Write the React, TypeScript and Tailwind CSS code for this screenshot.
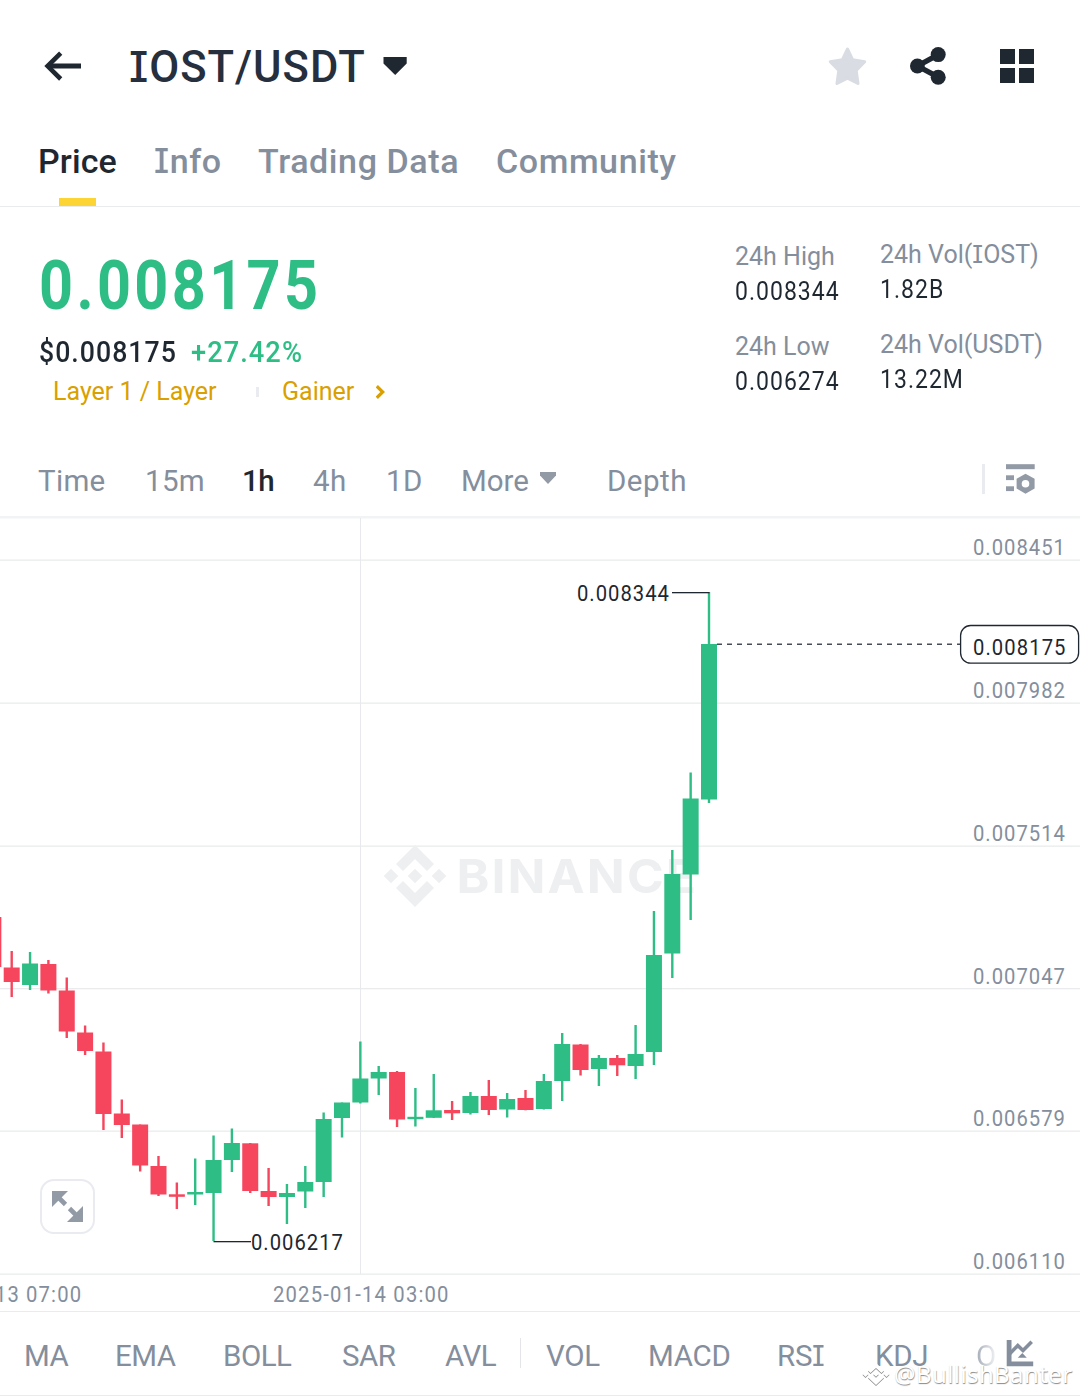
import { useState } from 'react'

const tabs = [
  { name: 'Price', size: 'w-[116px]' },
  { name: 'Info', size: 'w-[104px]' },
  { name: 'Trading Data', size: 'w-[238px]' },
  { name: 'Community', size: 'w-[190px]' },
];

const intervals = [
  { name: 'Time', size: 'w-[107px]' },
  { name: '15m', size: 'w-[97px]' },
  { name: '1h', size: 'w-[71px]' },
  { name: '4h', size: 'w-[73px]' },
  { name: '1D', size: 'w-[75px]' },
];

const mainIndicators = [
  { name: 'MA', size: 'w-[91px]' },
  { name: 'EMA', size: 'w-[108px]' },
  { name: 'BOLL', size: 'w-[119px]' },
  { name: 'SAR', size: 'w-[103px]' },
  { name: 'AVL', size: 'w-[75px]' },
];

const subIndicators = [
  { name: 'VOL', size: 'w-[102px]' },
  { name: 'MACD', size: 'w-[129px]' },
  { name: 'RSI', size: 'w-[98px]' },
  { name: 'KDJ', size: 'w-[101px]' },
];

const gridLines = [
  { y: 560, label: '0.008451' },
  { y: 703, label: '0.007982' },
  { y: 846, label: '0.007514' },
  { y: 988.5, label: '0.007047' },
  { y: 1131, label: '0.006579' },
  { y: 1274, label: '0.006110' },
];

// [direction, high, body top, body bottom, low]
type Candle = ['up' | 'down', number, number, number, number];

const candles: Candle[] = [
  ['down', 917, 917, 967, 967],
  ['down', 951, 967.5, 982, 997],
  ['up', 952, 963.5, 985, 990],
  ['down', 960, 964, 990.5, 993.5],
  ['down', 977.5, 990.5, 1031.5, 1038],
  ['down', 1025.5, 1032.5, 1051, 1055],
  ['down', 1042.5, 1051.5, 1114, 1130],
  ['down', 1099.5, 1113.5, 1125, 1138],
  ['down', 1124.5, 1124.5, 1165.5, 1171.5],
  ['down', 1156, 1166, 1194.5, 1196],
  ['down', 1182.5, 1194.3, 1196.8, 1209],
  ['up', 1158.5, 1192, 1194.5, 1205],
  ['up', 1135.5, 1160, 1193, 1241],
  ['up', 1128.5, 1143, 1160, 1172],
  ['down', 1143, 1143.3, 1191, 1193],
  ['down', 1168, 1191, 1197, 1206],
  ['up', 1184, 1193, 1197, 1224],
  ['up', 1166, 1182, 1191.5, 1208],
  ['up', 1112.5, 1119, 1182, 1197],
  ['up', 1102.5, 1102.5, 1118, 1137.5],
  ['up', 1041.5, 1078.5, 1102.5, 1103.5],
  ['up', 1066, 1072, 1078.5, 1095],
  ['down', 1071, 1072, 1119.5, 1127],
  ['up', 1088, 1116.8, 1119.2, 1126.5],
  ['up', 1074, 1110.3, 1117.8, 1118],
  ['down', 1101, 1110, 1113.3, 1120],
  ['up', 1092, 1096, 1113, 1114.5],
  ['down', 1080, 1096, 1110, 1115],
  ['up', 1093, 1099, 1109.5, 1117.5],
  ['down', 1090, 1098, 1110, 1110.3],
  ['up', 1074, 1081, 1109, 1109.5],
  ['up', 1033, 1044, 1081, 1101],
  ['down', 1044, 1044.5, 1070, 1075.5],
  ['up', 1055, 1058, 1069, 1086],
  ['down', 1055, 1058, 1065.3, 1076],
  ['up', 1025, 1054, 1066, 1079],
  ['up', 911, 955, 1052, 1065],
  ['up', 850, 874, 953.5, 978],
  ['up', 772.5, 798.5, 874.5, 920],
  ['up', 592, 644, 799.5, 803],
];

// The default I has no serifs, cv08 turns them on
const SerifI = () => (
  <span className="font-['Inter'] text-[0.98em] [font-feature-settings:'cv08']">I</span>
)

const withSerifI = (text: string) =>
  text.split(/(I)/).map((part, i) => (part === 'I' ? <SerifI key={i} /> : part))

const Header = () => (
  <header className="flex h-[133px] items-center pb-[1px]">
    <svg className="ml-[44px] h-[32px] w-[38px]" viewBox="44 50.3 38 32" fill="none" stroke="#1f2730">
      <path d="M48 66.4H81" strokeWidth="5" />
      <path d="M60.7 53.5L47.6 66.4L60.7 79.3" strokeWidth="4.6" />
    </svg>
    <h1 className="ml-[47px] w-[254px] pt-[3px] text-[43.5px] leading-[52px] font-medium tracking-[1px] whitespace-nowrap text-[#252f3e]">
      {withSerifI('IOST/USDT')}
    </h1>
    <svg className="h-[18px] w-[24px]" viewBox="0 0 24 18">
      <path d="M0.5 0H23.7V6.5L12.2 18L0.5 6.5Z" fill="#1f2730" />
    </svg>
    <svg className="ml-[421px] h-[40px] w-[39px]" viewBox="828 46.5 39 40">
      <path
        d="M847.5 49.5L852.7 60.3L864.7 62.2L856.2 71L858 84L847.5 78.6L837 84L838.8 71L830.3 62.2L842.3 60.3Z"
        fill="#d9dce2" stroke="#d9dce2" strokeWidth="3" strokeLinejoin="round"
      />
    </svg>
    <svg className="ml-[42px] h-[40px] w-[38px]" viewBox="909 46 38 40">
      <path d="M938.3 54.6L917.6 66L938.3 77.2" stroke="#1f2730" strokeWidth="5.4" fill="none" />
      <circle cx="917.4" cy="66" r="7.4" fill="#1f2730" />
      <circle cx="938.2" cy="54.6" r="7.5" fill="#1f2730" />
      <circle cx="938.2" cy="77.2" r="7.5" fill="#1f2730" />
    </svg>
    <div className="ml-[53px] grid grid-cols-[15px_15px] gap-[4px]">
      <span className="h-[15px] bg-[#1f2730]" />
      <span className="h-[15px] bg-[#1f2730]" />
      <span className="h-[15px] bg-[#1f2730]" />
      <span className="h-[15px] bg-[#1f2730]" />
    </div>
  </header>
)

const Tabs = () => {
  const [active, setActive] = useState('Price');
  return (
    <nav className="flex h-[74px] border-b border-[#eaebec] pl-[38px] text-[34px] leading-[57px] font-medium tracking-[0.6px]">
      {tabs.map(({ name, size }) => (
        <button key={name} onClick={() => setActive(name)} className={`flex flex-col items-start whitespace-nowrap ${size}`}>
          <span className={name === active ? 'tracking-[0.1px] text-[#1f2730]' : 'text-[#848e9c]'}>{withSerifI(name)}</span>
          {name === active && <span className="mt-[8px] ml-[21px] h-[8px] w-[37px] bg-[#fcd535]" />}
        </button>
      ))}
    </nav>
  )
}

const Stat = ({ label, value }: { label: string; value: string }) => (
  <div className="h-[90px] whitespace-nowrap">
    <p className="text-[25px] leading-[35px] text-[#848e9c]">{withSerifI(label)}</p>
    <p className="origin-left scale-x-[0.92] text-[25px] leading-[35px] tracking-[1.1px] text-[#1f2730]">{value}</p>
  </div>
)

const Summary = () => (
  <section className="flex h-[236px]">
    <div className="w-[735px] shrink-0 pt-[43px] pl-[39px]">
      <p className="origin-left scale-x-[0.86] text-[69px] leading-[72px] font-bold tracking-[3.9px] text-[#2ebd85]">0.008175</p>
      <p className="mt-[12px] flex text-[29px] leading-[36px] font-medium">
        <span className="w-[152px] origin-left scale-x-[0.92] tracking-[1.1px] text-[#1f2730]">$0.008175</span>
        <span className="origin-left scale-x-[0.94] tracking-[1.1px] text-[#2ebd85]">+27.42%</span>
      </p>
      <p className="mt-[6px] flex items-center pl-[14px] text-[25px] leading-[32px] text-[#d9a000]">
        <span className="w-[203px]">Layer 1 / Layer</span>
        <span className="h-[10px] w-[3px] bg-[#eaebf0]" />
        <span className="ml-[23px] w-[94px]">Gainer</span>
        <svg className="h-[14px] w-[10px]" viewBox="0 0 10 14" fill="none" stroke="#d9a000" strokeWidth="3.2">
          <path d="M0.8 1.2L6.7 7L0.8 12.8" />
        </svg>
      </p>
    </div>
    <div className="w-[145px] shrink-0 pt-[32px]">
      <Stat label="24h High" value="0.008344" />
      <Stat label="24h Low" value="0.006274" />
    </div>
    <div className="pt-[30px]">
      <Stat label="24h Vol(IOST)" value="1.82B" />
      <Stat label="24h Vol(USDT)" value="13.22M" />
    </div>
  </section>
)

const Intervals = () => {
  const [active, setActive] = useState('1h');
  return (
    <div className="flex h-[73px] items-center pb-[1px] pl-[38px] text-[29.5px] leading-[36px] tracking-[0.3px] text-[#848e9c]">
      {intervals.map(({ name, size }) => (
        <button
          key={name}
          onClick={() => setActive(name)}
          className={`pt-[4px] text-left ${size} ${name === active ? 'font-medium tracking-[-0.6px] text-[#1f2730]' : ''}`}
        >
          {name}
        </button>
      ))}
      <button className="flex w-[146px] items-center">
        <span className="w-[79px] pt-[4px] text-left tracking-[0px]">More</span>
        <svg className="mb-[3px] h-[12px] w-[16px]" viewBox="0 0 16 12">
          <path d="M0 0H16V3.5L8 12L0 3.5Z" fill="#929aa5" />
        </svg>
      </button>
      <button className="w-[375px] pt-[4px] text-left tracking-[0.5px]">Depth</button>
      <span className="h-[30px] w-[3px] bg-[#eaebf0]" />
      <svg className="ml-[20px] h-[30px] w-[30px]" viewBox="1005 464 30 30" fill="#929aa5">
        <rect x="1006" y="464.2" width="28.7" height="5" />
        <rect x="1006" y="475.3" width="8" height="4.8" />
        <rect x="1006" y="486.3" width="8" height="4.8" />
        <path fillRule="evenodd" d="M1025.5 473.7L1034.6 478.8V488.6L1025.5 493.7L1016.6 488.6V478.8ZM1025.5 480A3.8 3.8 0 1 0 1025.5 487.6A3.8 3.8 0 1 0 1025.5 480Z" />
      </svg>
    </div>
  )
}

// Slightly condensed digits, spaced out to the given width
const ChartText = ({ x, y, width, children }: { x: number; y: number; width: number; children: string }) => (
  <text transform={`translate(${x} ${y}) scale(0.92 1)`} textLength={width / 0.92}>{children}</text>
)

const Chart = () => (
  <svg className="block h-[796px] w-[1080px] text-[22px]" viewBox="0 516 1080 796">
    <rect x="0" y="516" width="1080" height="2.5" fill="#f2f3f4" />
    {gridLines.map(({ y, label }) => (
      <g key={label} fill="#848e9c">
        <rect x="0" y={y - 0.5} width="1080" height="1.3" fill="#eaebec" />
        <ChartText x={973} y={y - 5} width={92}>{label}</ChartText>
      </g>
    ))}
    <rect x="360" y="518" width="1" height="756" fill="#e8e9ed" />
    <rect x="0" y="1311" width="1080" height="1" fill="#eaebec" />

    <g fill="#eeeff1">
      <path d="M415 845L434 864L427 871L415 859L403 871L396 864Z" />
      <path d="M415 907L434 888L427 881L415 893L403 881L396 888Z" />
      <path d="M415 868.7L422.3 876L415 883.3L407.7 876Z" />
      <path d="M391 868.7L398.3 876L391 883.3L383.7 876Z" />
      <path d="M439 868.7L446.3 876L439 883.3L431.7 876Z" />
      <text transform="translate(456.5 893) scale(1.06 1)" textLength="226" className="font-['Inter'] text-[47px] font-bold">BINANCE</text>
    </g>

    {candles.map(([direction, high, top, bottom, low], i) => {
      const x = -6.65 + i * 18.35;
      return (
        <g key={i} fill={direction === 'up' ? '#2ebd85' : '#f6465d'}>
          <rect x={x - 1.2} y={high} width="2.4" height={low - high} />
          <rect x={x - 8} y={top} width="16" height={bottom - top} />
        </g>
      )
    })}

    <g fill="#1f2730">
      <rect x="672" y="592" width="37.5" height="1.3" />
      <ChartText x={577} y={601} width={92}>0.008344</ChartText>
      <rect x="213.5" y="1241" width="37.5" height="1.3" />
      <ChartText x={251} y={1250} width={92}>0.006217</ChartText>
    </g>

    <path d="M717 644.2H960" stroke="#474d57" strokeWidth="1.4" strokeDasharray="5 5" />
    <rect x="960.6" y="625.5" width="118" height="37.6" rx="10" fill="white" stroke="#1f2730" strokeWidth="1.3" />
    <g fill="#1f2730">
      <ChartText x={973} y={655} width={92.5}>0.008175</ChartText>
    </g>

    <g fill="#848e9c">
      <ChartText x={-5} y={1302} width={86}>13 07:00</ChartText>
      <ChartText x={273} y={1302} width={175.5}>2025-01-14 03:00</ChartText>
    </g>

    <rect x="41" y="1180" width="53" height="53" rx="13" fill="white" stroke="#eaebf0" strokeWidth="2" />
    <g fill="#929aa5" stroke="#929aa5">
      <path stroke="none" d="M52 1191H68L52 1207Z" />
      <path stroke="none" d="M83 1222H67L83 1206Z" />
      <path strokeWidth="4.6" d="M57 1196L65.5 1204.5" />
      <path strokeWidth="4.6" d="M69.5 1208.5L78 1217" />
    </g>
  </svg>
)

const Indicators = () => (
  <footer className="relative flex h-[84px] items-center border-b border-[#eaebec] pl-[24px] text-[29.5px] text-[#848e9c]">
    {mainIndicators.map(({ name, size }) => (
      <button key={name} className={`pt-[5px] text-left tracking-[-0.5px] ${size}`}>{name}</button>
    ))}
    <span className="mb-[1px] h-[30px] w-[1px] bg-[#e3e5e9]" />
    <span className="w-[25px]" />
    {subIndicators.map(({ name, size }) => (
      <button key={name} className={`pt-[5px] text-left tracking-[-0.3px] ${size}`}>{withSerifI(name)}</button>
    ))}
    <span className="w-[30px] bg-linear-to-r from-[#a5acb7] to-[#f5f6f7] to-70% bg-clip-text pt-[5px] text-transparent">O</span>
    <svg className="mb-[1px] h-[28px] w-[28px]" viewBox="1006 1340 28 28">
      <path d="M1006.7 1341H1011.5V1362.5H1033.2V1367.2H1006.7Z" fill="#848e9c" />
      <path d="M1009.5 1355L1017.8 1346.5L1023 1351.5L1031.7 1342.7" stroke="#848e9c" strokeWidth="3.6" fill="none" />
      <path d="M1017.8 1358.8L1022.3 1354L1026.8 1358.8Z" fill="#848e9c" />
    </svg>
    <div className="absolute top-[49px] left-[862px] flex items-center gap-[4px] font-['Noto_Sans'] text-[24px] leading-[26px] tracking-[0.4px] text-white">
      <svg className="h-[26px] w-[28px] drop-shadow-[0.5px_1px_0.5px_#8a8a8a]" viewBox="0 0 28 26" fill="white">
        <path d="M14 2L22 9.5L19.5 12L14 7L8.5 12L6 9.5Z" />
        <path d="M14 24L22 16.5L19.5 14L14 19L8.5 14L6 16.5Z" />
        <path d="M14 10.2L16.8 13L14 15.8L11.2 13Z" />
        <path d="M3.5 10L6.5 13L3.5 16L0.5 13Z" />
        <path d="M24.5 10L27.5 13L24.5 16L21.5 13Z" />
      </svg>
      <span className="[text-shadow:0.5px_1px_1px_#888]">@BullishBanter</span>
    </div>
  </footer>
)

function App() {
  return (
    <div className="h-[1397px] w-[1080px] overflow-hidden bg-white font-['Roboto',sans-serif]">
      <Header />
      <Tabs />
      <Summary />
      <Intervals />
      <Chart />
      <Indicators />
    </div>
  )
}

export default App
